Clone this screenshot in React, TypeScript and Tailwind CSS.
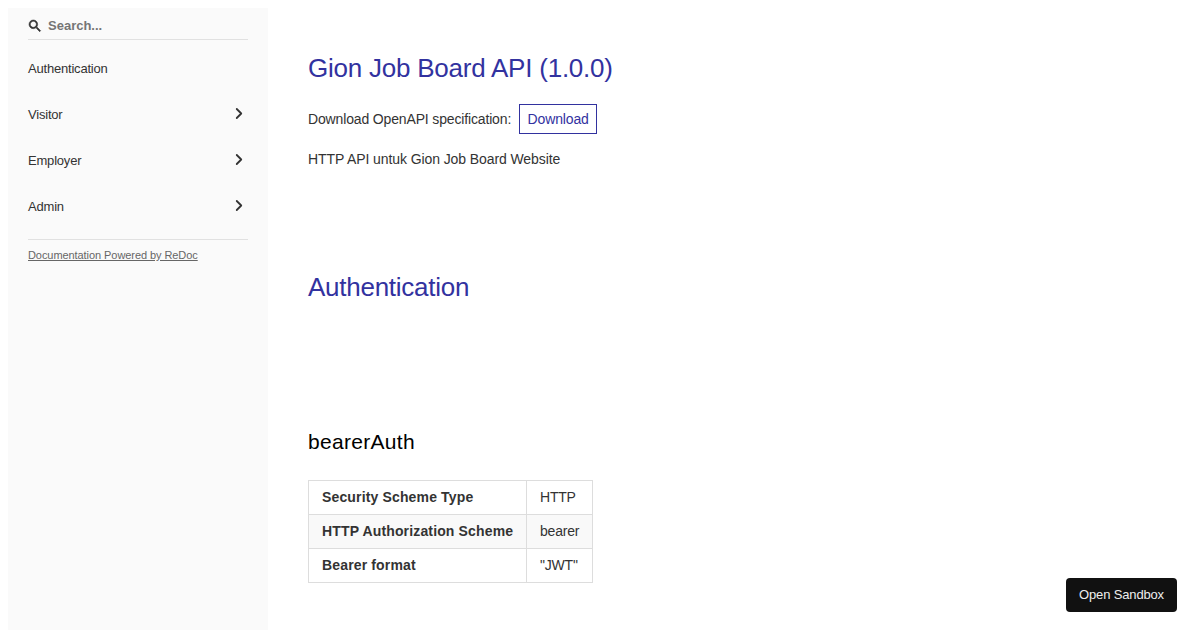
import { ChevronRight } from "lucide-react";

const font = "font-['Liberation_Sans',Arial,sans-serif]";

const menu = [
  { label: "Authentication", hasChildren: false },
  { label: "Visitor", hasChildren: true },
  { label: "Employer", hasChildren: true },
  { label: "Admin", hasChildren: true },
];

const schemeRows = [
  { name: "Security Scheme Type", value: "HTTP" },
  { name: "HTTP Authorization Scheme", value: "bearer", shaded: true },
  { name: "Bearer format", value: '"JWT"' },
];

function Sidebar() {
  return (
    <aside className="w-[260px] shrink-0 h-[622px] bg-[#fafafa] px-5">
      {/* Search */}
      <div className="flex items-center h-[32px] pt-[5px] border-b border-[#e1e1e1]">
        <svg width="16" height="16" viewBox="0 0 24 24" className="shrink-0 fill-[#333333] -ml-px">
          <path d="M15.5 14h-.79l-.28-.27A6.47 6.47 0 0 0 16 9.5 6.5 6.5 0 1 0 9.5 16c1.61 0 3.09-.59 4.23-1.57l.27.28v.79l5 4.99L20.49 19l-4.99-5zm-6 0C7.01 14 5 11.99 5 9.5S7.01 5 9.5 5 14 7.01 14 9.5 11.99 14 9.5 14z" stroke="#333333" strokeWidth="0.8" />
        </svg>
        <span className="ml-[5px] text-[13px] font-bold text-[#757575]">Search...</span>
      </div>

      {/* Menu */}
      <nav className="mt-[6px] flex flex-col">
        {menu.map((item) => (
          <div key={item.label} className="flex items-center justify-between h-[46px] text-[13px] tracking-[-0.2px] text-[#333333]">
            <span>{item.label}</span>
            {item.hasChildren && (
              <ChevronRight className="w-[18px] h-[18px] text-[#333333] -translate-y-[1.5px]" strokeWidth={2.4} />
            )}
          </div>
        ))}
      </nav>

      <div className="mt-[9px] border-t border-[#e1e1e1] pt-[9px]">
        <a className="text-[11px] leading-[13px] tracking-[-0.07px] text-[#666666] underline block">
          Documentation Powered by ReDoc
        </a>
      </div>
    </aside>
  );
}

export default function App() {
  return (
    <div className={`${font} relative h-[630px] overflow-hidden bg-white pl-2 pt-2`}>
      <div className="flex">
        <Sidebar />

        <main className="flex-1 pl-10 pt-[42px]">
          <h1 className="text-[26px] leading-[36px] tracking-[-0.23px] font-normal text-[#32329f]">
            Gion Job Board API (1.0.0)
          </h1>

          <div className="mt-[18px] flex items-center text-[14px] tracking-[-0.15px] text-[#333333]">
            <span>Download OpenAPI specification:</span>
            <a className="ml-2 border border-[#32329f] w-[78px] justify-center h-[30px] flex items-center text-[#32329f]">
              Download
            </a>
          </div>

          <p className="mt-[15px] text-[14px] leading-[20px] tracking-[-0.09px] text-[#333333]">
            HTTP API untuk Gion Job Board Website
          </p>

          <h2 className="mt-[100px] text-[26px] leading-[36px] tracking-[-0.26px] font-normal text-[#32329f]">
            Authentication
          </h2>

          <h3 className="mt-[123px] text-[21px] leading-[28px] tracking-[0.3px] font-normal text-black">
            bearerAuth
          </h3>

          <table className="mt-[24px] w-[285px] table-fixed border-collapse text-[14px] text-[#333333]">
            <tbody>
              {schemeRows.map((row) => (
                <tr key={row.name} className={row.shaded ? "bg-[#f9f9f9]" : ""}>
                  <td className="w-[218px] border border-[#dddddd] pl-[13px] h-[34px] font-bold tracking-[0.15px]">{row.name}</td>
                  <td className="border border-[#dddddd] pl-[13px] h-[34px] tracking-[-0.2px]">{row.value}</td>
                </tr>
              ))}
            </tbody>
          </table>
        </main>
      </div>

      {/* Floating sandbox button */}
      <button className="absolute left-[1066px] top-[578px] w-[111px] h-[34px] rounded-[4px] bg-[#111111] text-[13px] tracking-[-0.15px] text-[#eeeeee]">
        Open Sandbox
      </button>
    </div>
  );
}
